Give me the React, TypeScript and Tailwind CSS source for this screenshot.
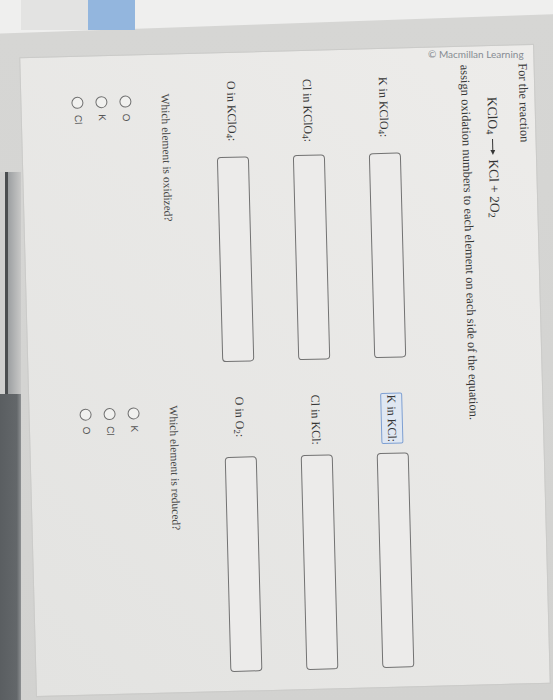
import React from 'react';

// Photo of a Macmillan Learning question page, page turned on its side
const rows = [
  { left: <>K in KClO<sub>4</sub>:</>, right: <>K in KCl:</>, focus: true },
  { left: <>Cl in KClO<sub>4</sub>:</>, right: <>Cl in KCl:</>, focus: false },
  { left: <>O in KClO<sub>4</sub>:</>, right: <>O in O<sub>2</sub>:</>, focus: false },
];

const Arrow = () => (
  <svg width="16" height="8" viewBox="0 0 16 8" className="ml-[5px] mr-[4px]">
    <line x1="0" y1="4" x2="13" y2="4" stroke="#353535" strokeWidth="1" />
    <polygon points="11,1.6 16,4 11,6.4" fill="#353535" />
  </svg>
);

const Radio = ({ label }: { label: string }) => (
  <div className="flex h-[24px] items-center">
    <span className="h-[12px] w-[12px] rounded-full border border-[#6f6f6f] bg-[#f1f1ef]" />
    <span className="ml-[6px] font-['Liberation_Sans',sans-serif] text-[10px] text-[#555]">{label}</span>
  </div>
);

const Box = ({ w }: { w: string }) => (
  <div className={`h-[32px] shrink-0 rounded-[4px] border-[1.5px] border-[#727272] bg-[#ecebea] ${w}`} />
);

const Page = () => (
  <div className="h-[515px] w-[640px] shrink-0 -translate-x-[2px] translate-y-[5px] rotate-[88.5deg] border border-[#cbcbc9] bg-[linear-gradient(135deg,#edecea,#e3e3e1)] pl-[18px] pt-[3px] font-['Liberation_Serif',serif] text-[#353535]">
    <p className="text-[12.5px] leading-[16px]">For the reaction</p>
    <div className="ml-[33px] mt-[16px] flex h-[16px] items-center text-[13.5px]">
      <span>KClO<sub>4</sub></span>
      <Arrow />
      <span>KCl + 2O<sub>2</sub></span>
    </div>
    <p className="mt-[10px] text-[12.5px] leading-[16px]">
      assign oxidation numbers to each element on each side of the equation.
    </p>

    <div className="mt-[58px] flex flex-col gap-[44px] pl-[10px] text-[12px]">
      {rows.map((r, i) => (
        <div key={i} className="flex h-[32px] items-center">
          <span className="w-[76px] shrink-0">{r.left}</span>
          <Box w="w-[205px]" />
          <span className="ml-[35px] w-[60px] shrink-0">
            {r.focus ? (
              <span className="inline-flex h-[22px] items-center rounded-[2px] border-[1.5px] border-[#7d9fd2] bg-[#dfe7f2] px-[1px]">
                {r.right}
              </span>
            ) : (
              r.right
            )}
          </span>
          <Box w="w-[215px]" />
        </div>
      ))}
    </div>

    <div className="mt-[42px] flex text-[11.5px] text-[#444]">
      <div className="w-[333px] pl-[21px]">
        <p className="leading-[16px]">Which element is oxidized?</p>
        <div className="mt-[19.5px] pl-[1px]">
          <Radio label="O" />
          <Radio label="K" />
          <Radio label="Cl" />
        </div>
      </div>
      <div>
        <p className="leading-[16px]">Which element is reduced?</p>
        <div className="mt-[19.5px] pl-[1px]">
          <Radio label="K" />
          <Radio label="Cl" />
          <Radio label="O" />
        </div>
      </div>
    </div>
  </div>
);

export default function App() {
  return (
    <div className="relative flex h-[700px] w-[553px] overflow-hidden bg-[linear-gradient(178deg,#efefee_33px,#d6d6d4_34px,#d2d2d0)]">
      {/* monitor bezel on the left */}
      <div className="flex w-[21px] shrink-0 flex-col">
        <div className="h-[172px] shrink-0" />
        <div className="flex h-[222px] shrink-0">
          <div className="w-[5px] bg-[#cfcfce]" />
          <div className="w-[3px] bg-[#4a4d4f]" />
          <div className="flex-1 bg-[linear-gradient(90deg,#9c9fa1,#c8c8c7)]" />
        </div>
        <div className="flex-1 bg-[linear-gradient(90deg,#5a5e61,#63676a_80%,#8d9092)]" />
      </div>

      <div className="flex min-w-0 flex-1 flex-col">
        <div className="flex h-[30px] shrink-0">
          <div className="w-[67px] bg-[#e3e3e2]" />
          <div className="w-[47px] bg-[#93b6de]" />
        </div>
        <div className="flex min-h-0 min-w-0 flex-1 items-center justify-center">
          <Page />
        </div>
      </div>

      <span className="absolute left-[428px] top-[48px] font-['Lato',sans-serif] text-[10px] leading-[12px] text-[#868b92]">
        © Macmillan Learning
      </span>
    </div>
  );
}
